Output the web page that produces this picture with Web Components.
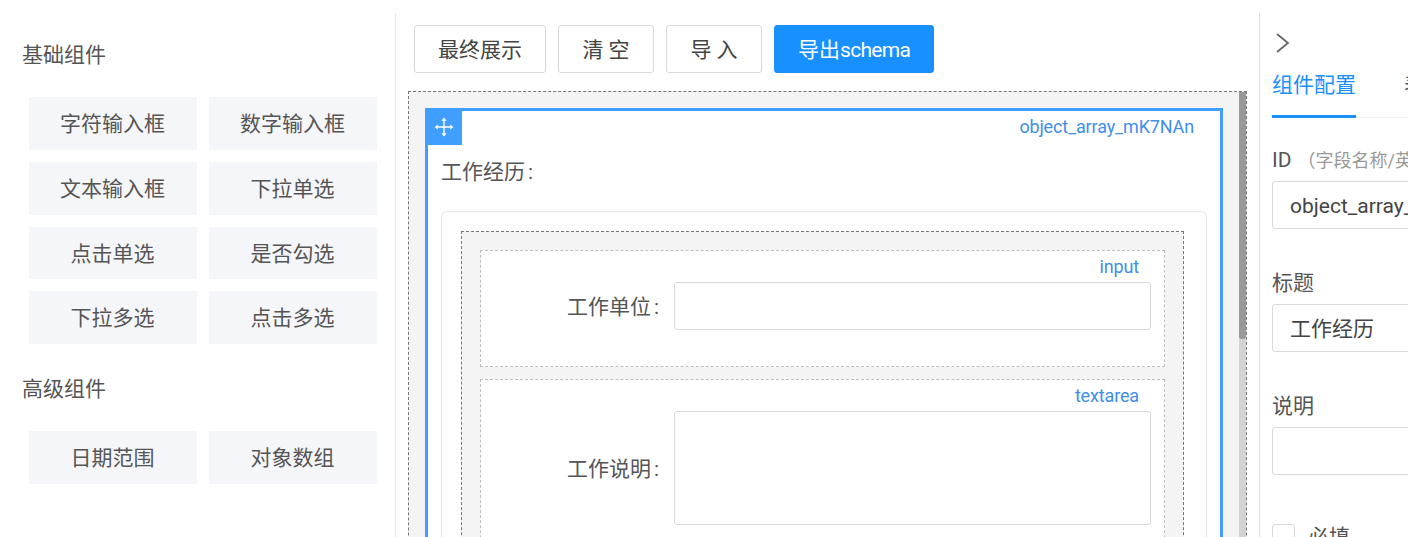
<!DOCTYPE html>
<html lang="zh">
<head>
<meta charset="utf-8">
<title>schema</title>
<style>
  html, body { margin: 0; height: 537px; overflow: hidden; background: #fff; }
  body { font-family: Roboto, "Noto Sans CJK SC", sans-serif; font-size: 21px; color: #555; }
</style>
</head>
<body>
<app-shell>
  <tile-list slot="left" title="基础组件" items="字符输入框,数字输入框,文本输入框,下拉单选,点击单选,是否勾选,下拉多选,点击多选"></tile-list>
  <tile-list slot="left" title="高级组件" items="日期范围,对象数组"></tile-list>

  <tool-button slot="tools">最终展示</tool-button>
  <tool-button slot="tools">清 空</tool-button>
  <tool-button slot="tools">导 入</tool-button>
  <tool-button slot="tools" primary>导出<span style="letter-spacing:-.7px">schema</span></tool-button>

  <form-canvas slot="canvas">
    <array-field tag="object_array_mK7NAn" label="工作经历">
      <form-row tag="input" label="工作单位"></form-row>
      <form-row tag="textarea" label="工作说明" tall></form-row>
    </array-field>
  </form-canvas>

  <config-panel slot="right"></config-panel>
</app-shell>

<script>
class AppShell extends HTMLElement {
  connectedCallback() {
    const root = this.attachShadow({ mode: "open" });
    root.innerHTML = `
    <style>
    :host { display: grid; grid-template-columns: 396px 863px 400px; width: 1659px; height: 537px; box-sizing: border-box; padding-top: 13px; }
    .left { border-right: 1px solid #e8e8e8; padding: 0 17px 0 23px; }
    .center { padding: 12px 12px 0 12px; min-width: 0; display: flex; flex-direction: column; }
    .tools { display: flex; gap: 12px; padding-left: 6px; margin-bottom: 18px; }
    .right { border-left: 1px solid #e0e0e0; min-height: 0; }
    </style>
    <div class="left"><slot name="left"></slot></div>
    <div class="center">
      <div class="tools"><slot name="tools"></slot></div>
      <slot name="canvas"></slot>
    </div>
    <div class="right"><slot name="right"></slot></div>
    `;
  }
}

class TileList extends HTMLElement {
  connectedCallback() {
    const root = this.attachShadow({ mode: "open" });
    const items = this.getAttribute("items").split(",");
    root.innerHTML = `
    <style>
    :host { display: block; }
    :host(:nth-child(2)) { margin-top: 3px; }
    h3 { margin: 0 0 0 -1px; padding-top: 26px; font-size: 21px; font-weight: 400; line-height: 32px; color: #555; }
    .grid { display: grid; grid-template-columns: 168px 168px; gap: 12px; padding: 26px 0 0 6px; }
    .tile { height: 52.75px; line-height: 55px; padding-right: 1px; box-sizing: border-box; text-align: center; background: #f5f6fa; color: #555; }
    </style>
    <h3>${this.getAttribute("title")}</h3>
    <div class="grid">${items.map(i => `<div class="tile">${i}</div>`).join("")}</div>
    `;
  }
}

class ToolButton extends HTMLElement {
  connectedCallback() {
    const root = this.attachShadow({ mode: "open" });
    root.innerHTML = `
    <style>
    :host { display: block; }
    .btn { height: 48px; min-width: 96px; text-align: center; box-sizing: border-box; padding: 0 23px; line-height: 48px; border: 1px solid #d9d9d9; border-radius: 3px; background: #fff; color: #444; white-space: nowrap; }
    :host([primary]) .btn { background: #1890ff; border-color: #1890ff; color: #fff; }
    </style>
    <div class="btn"><slot></slot></div>
    `;
  }
}

class FormCanvas extends HTMLElement {
  connectedCallback() {
    const root = this.attachShadow({ mode: "open" });
    root.innerHTML = `
    <style>
    :host { display: flex; height: 600px; box-sizing: border-box; border: 1px dashed #777; background: #f4f4f4; }
    .body { flex: 1; min-width: 0; padding: 16px; }
    .track { width: 7px; flex: none; background: #d3d3d3; }
    .thumb { height: 247px; background: #999; border-radius: 0 0 3px 3px; }
    </style>
    <div class="body"><slot></slot></div>
    <div class="track"><div class="thumb"></div></div>
    `;
  }
}

class ArrayField extends HTMLElement {
  connectedCallback() {
    const root = this.attachShadow({ mode: "open" });
    root.innerHTML = `
    <style>
    :host { display: block; position: relative; box-sizing: border-box; border: 3px solid #409eff; background: #fff; padding: 0 13px; height: 600px; }
    .handle { position: absolute; left: -3px; top: -3px; width: 37px; height: 37px; background: #409eff; display: flex; align-items: center; justify-content: center; }
    .tag { position: absolute; right: 26px; top: 4px; font-size: 18px; line-height: 24px; color: #3f8ee8; letter-spacing: -.15px; }
    .label { padding: 45px 0 0 0; line-height: 32px; height: 55px; color: #555; }
    .colon { margin-left: 3px; }
    .card { border: 1px solid #e8e8e8; border-radius: 6px; padding: 19px 22px 0 19px; height: 500px; }
    .list { border: 1px dashed #777; background: #f4f4f4; padding: 18px 18px 0; height: 500px; display: flex; flex-direction: column; gap: 12px; }
    </style>
    <div class="handle">
      <svg width="20" height="20" viewBox="0 0 20 20" fill="#fff" stroke="none">
        <path d="M9.3 2.5h1.4v15h-1.4zM2.5 9.3h15v1.4h-15z"/>
        <path d="M10 .6l2.6 3.2h-5.2zM10 19.4l2.6-3.2h-5.2zM.6 10l3.2-2.6v5.2zM19.4 10l-3.2-2.6v5.2z"/>
      </svg>
    </div>
    <div class="tag">${this.getAttribute("tag")}</div>
    <div class="label">${this.getAttribute("label")}<span class="colon">:</span></div>
    <div class="card"><div class="list"><slot></slot></div></div>
    `;
  }
}

class FormRow extends HTMLElement {
  connectedCallback() {
    const root = this.attachShadow({ mode: "open" });
    const tall = this.hasAttribute("tall");
    root.innerHTML = `
    <style>
    :host { display: block; position: relative; box-sizing: border-box; flex: none; height: ${tall ? 250 : 117}px; background: #fff; border: 1px dashed #bdbdbd; padding: 31px 13px 0 0; }
    .tag { position: absolute; right: 25px; top: 4px; font-size: 18px; line-height: 24px; color: #3f8ee8; letter-spacing: -.15px; }
    .row { display: grid; grid-template-columns: 178px 477px; column-gap: 15px; align-items: center; }
    .label { text-align: right; color: #555; white-space: nowrap; line-height: 32px; padding-top: 2px; }
    .colon { margin-left: 3px; }
    .box { height: ${tall ? 114 : 48}px; box-sizing: border-box; border: 1px solid #d9d9d9; border-radius: 3px; background: #fff; }
    </style>
    <div class="tag">${this.getAttribute("tag")}</div>
    <div class="row">
      <div class="label">${this.getAttribute("label")}<span class="colon">:</span></div>
      <div class="box"></div>
    </div>
    `;
  }
}

class ConfigInput extends HTMLElement {
  connectedCallback() {
    const root = this.attachShadow({ mode: "open" });
    root.innerHTML = `
    <style>
    :host { display: block; height: 123px; }
    .label { line-height: 32px; height: 37px; color: #555; white-space: nowrap; }
    .hint { font-size: 18px; color: #999; margin-left: 6px; }
    .box { height: 48px; box-sizing: border-box; border: 1px solid #d9d9d9; border-radius: 3px; padding: 0 17px; line-height: 49px; color: #444; white-space: nowrap; }
    </style>
    <div class="label">${this.getAttribute("label")}<span class="hint">${this.getAttribute("hint") || ""}</span></div>
    <div class="box">${this.getAttribute("value") || ""}</div>
    `;
  }
}

class ConfigPanel extends HTMLElement {
  connectedCallback() {
    const root = this.attachShadow({ mode: "open" });
    root.innerHTML = `
    <style>
    :host { display: block; padding-left: 12px; }
    .arrow { display: block; margin: 20px 0 0 4px; }
    .tabs { display: flex; gap: 48px; margin-top: 16px; border-bottom: 1px solid #f0f0f0; box-sizing: border-box; height: 49px; line-height: 32px; }
    .tab { color: #555; white-space: nowrap; box-sizing: border-box; height: 49px; }
    .tab.on { color: #1890ff; border-bottom: 3px solid #1890ff; }
    .fields { padding-top: 26px; }
    .check { display: flex; align-items: flex-start; gap: 13px; line-height: 32px; margin-top: 8px; }
    .check i { display: block; width: 23px; height: 23px; box-sizing: border-box; border: 1px solid #d9d9d9; border-radius: 3px; margin-top: 3px; }
    </style>
    <svg class="arrow" width="14" height="20" viewBox="0 0 14 20" fill="none" stroke="#666" stroke-width="1.8">
      <path d="M1 1l11 9-11 9"/>
    </svg>
    <div class="tabs">
      <div class="tab on">组件配置</div>
      <div class="tab">表单配置</div>
    </div>
    <div class="fields">
      <config-input label="ID" hint="（字段名称/英文）" value="object_array_mK7NAn"></config-input>
      <config-input label="标题" value="工作经历"></config-input>
      <config-input label="说明"></config-input>
      <div class="check"><i></i><span>必填</span></div>
    </div>
    `;
  }
}

customElements.define("app-shell", AppShell);
customElements.define("tile-list", TileList);
customElements.define("tool-button", ToolButton);
customElements.define("form-canvas", FormCanvas);
customElements.define("array-field", ArrayField);
customElements.define("form-row", FormRow);
customElements.define("config-input", ConfigInput);
customElements.define("config-panel", ConfigPanel);
</script>
</body>
</html>
